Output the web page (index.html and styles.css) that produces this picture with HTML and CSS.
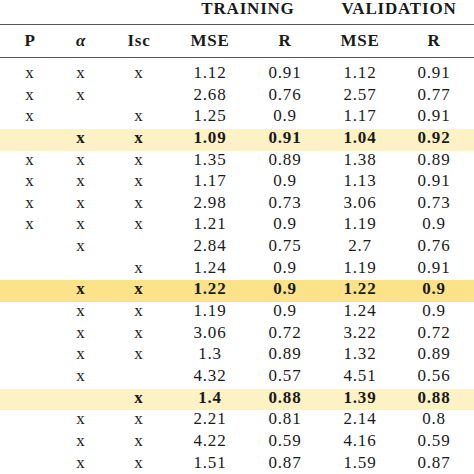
FILE: index.html
```html
<!DOCTYPE html>
<html>
<head>
<meta charset="utf-8">
<link rel="stylesheet" href="styles.css">
</head>
<body>
<div class="tbl">
  <div class="row groups">
    <div class="g-train">TRAINING</div>
    <div class="g-val">VALIDATION</div>
  </div>
  <div class="row head">
    <div>P</div><div><i>α</i></div><div>Isc</div><div>MSE</div><div>R</div><div>MSE</div><div>R</div>
  </div>
  <div class="body">
    <div class="row"><div>x</div><div>x</div><div>x</div><div>1.12</div><div>0.91</div><div>1.12</div><div>0.91</div></div>
    <div class="row"><div>x</div><div>x</div><div></div><div>2.68</div><div>0.76</div><div>2.57</div><div>0.77</div></div>
    <div class="row"><div>x</div><div></div><div>x</div><div>1.25</div><div>0.9</div><div>1.17</div><div>0.91</div></div>
    <div class="row hl-light"><div></div><div>x</div><div>x</div><div>1.09</div><div>0.91</div><div>1.04</div><div>0.92</div></div>
    <div class="row"><div>x</div><div>x</div><div>x</div><div>1.35</div><div>0.89</div><div>1.38</div><div>0.89</div></div>
    <div class="row"><div>x</div><div>x</div><div>x</div><div>1.17</div><div>0.9</div><div>1.13</div><div>0.91</div></div>
    <div class="row"><div>x</div><div>x</div><div>x</div><div>2.98</div><div>0.73</div><div>3.06</div><div>0.73</div></div>
    <div class="row"><div>x</div><div>x</div><div>x</div><div>1.21</div><div>0.9</div><div>1.19</div><div>0.9</div></div>
    <div class="row"><div></div><div>x</div><div></div><div>2.84</div><div>0.75</div><div>2.7</div><div>0.76</div></div>
    <div class="row"><div></div><div></div><div>x</div><div>1.24</div><div>0.9</div><div>1.19</div><div>0.91</div></div>
    <div class="row hl-strong"><div></div><div>x</div><div>x</div><div>1.22</div><div>0.9</div><div>1.22</div><div>0.9</div></div>
    <div class="row"><div></div><div>x</div><div>x</div><div>1.19</div><div>0.9</div><div>1.24</div><div>0.9</div></div>
    <div class="row"><div></div><div>x</div><div>x</div><div>3.06</div><div>0.72</div><div>3.22</div><div>0.72</div></div>
    <div class="row"><div></div><div>x</div><div>x</div><div>1.3</div><div>0.89</div><div>1.32</div><div>0.89</div></div>
    <div class="row"><div></div><div>x</div><div></div><div>4.32</div><div>0.57</div><div>4.51</div><div>0.56</div></div>
    <div class="row hl-light"><div></div><div></div><div>x</div><div>1.4</div><div>0.88</div><div>1.39</div><div>0.88</div></div>
    <div class="row"><div></div><div>x</div><div>x</div><div>2.21</div><div>0.81</div><div>2.14</div><div>0.8</div></div>
    <div class="row"><div></div><div>x</div><div>x</div><div>4.22</div><div>0.59</div><div>4.16</div><div>0.59</div></div>
    <div class="row"><div></div><div>x</div><div>x</div><div>1.51</div><div>0.87</div><div>1.59</div><div>0.87</div></div>
  </div>
</div>
</body>
</html>
```
FILE: styles.css
```css
html, body {
  margin: 0;
  padding: 0;
  background: #ffffff;
  overflow: hidden;
}
.tbl {
  width: 474px;
  font-family: "Liberation Serif", "Times New Roman", serif;
  font-size: 17px;
  letter-spacing: 0.8px;
  color: #1a1a1a;
}
.row {
  display: grid;
  grid-template-columns: 60px 42px 74px 68px 82px 68px 80px;
  text-align: center;
}
.groups {
  height: 24px;
  line-height: 17px;
  font-weight: bold;
  border-bottom: 1px solid #555555;
}
.g-train {
  grid-column: 4 / 6;
  padding-right: 6px;
}
.g-val {
  grid-column: 6 / 8;
  padding-right: 2px;
}
.head {
  height: 32px;
  line-height: 32px;
  font-weight: bold;
  border-bottom: 1px solid #555555;
}
.head i {
  font-style: italic;
}
.body {
  padding-top: 6px;
}
.body .row {
  height: 21.65px;
  line-height: 17.6px;
}
.hl-light {
  background: #fdf2c6;
  font-weight: bold;
}
.hl-strong {
  background: #fce389;
  font-weight: bold;
}
```
